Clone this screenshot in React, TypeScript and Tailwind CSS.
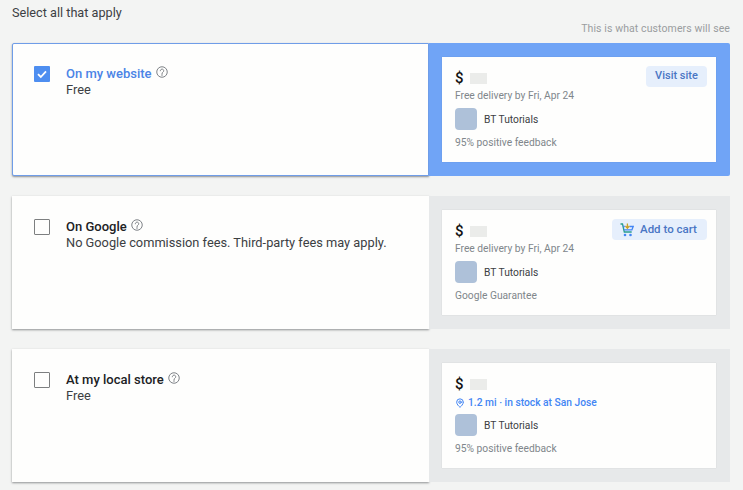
import { MapPin } from "lucide-react";

type Row = {
  title: string;
  subtitle: string;
  selected?: boolean;
  action?: "visit" | "cart";
  delivery?: string;
  location?: string;
  footer: string;
};

const ROWS: Row[] = [
  {
    title: "On my website",
    subtitle: "Free",
    selected: true,
    action: "visit",
    delivery: "Free delivery by Fri, Apr 24",
    footer: "95% positive feedback",
  },
  {
    title: "On Google",
    subtitle: "No Google commission fees. Third-party fees may apply.",
    action: "cart",
    delivery: "Free delivery by Fri, Apr 24",
    footer: "Google Guarantee",
  },
  {
    title: "At my local store",
    subtitle: "Free",
    location: "1.2 mi · in stock at San Jose",
    footer: "95% positive feedback",
  },
];

function HelpIcon() {
  return (
    <svg className="ml-[4px] mt-[-5px] h-[12px] w-[12px] text-[#70757a]" viewBox="0 0 24 24" fill="none" stroke="currentColor" strokeWidth={1.8}>
      <circle cx="12" cy="12" r="10.5" />
      <path d="M8.6 9.6a3.4 3.4 0 1 1 5.5 2.6c-1.3 1-2.1 1.6-2.1 3" strokeLinecap="round" />
      <circle cx="12" cy="18" r="0.6" fill="currentColor" />
    </svg>
  );
}

function CartIcon() {
  return (
    <svg className="h-[14px] w-[14px]" viewBox="0 0 14 14" fill="none" strokeWidth={1.3}>
      <path d="M0.5 1h2l1.8 8h7.4" stroke="#2a9d8f" />
      <path d="M3 3.5h1.8M9.5 3.5h3.7l-1.3 3.4H4" stroke="#4285f4" />
      <path d="M7.4 0.5v4.6M5.4 3l2 2.2 2-2.2" stroke="#c9a227" />
      <circle cx="5" cy="12" r="1.3" fill="#4285f4" />
      <circle cx="10.5" cy="12" r="1.3" fill="#4285f4" />
    </svg>
  );
}

function PreviewCard({ row }: { row: Row }) {
  return (
    <div className="relative h-[105px] w-full bg-[#fefefd] pl-[13px] pt-[13px] shadow-[0_0_1px_rgba(0,0,0,0.15)]">
      {row.action === "visit" && (
        <div className="absolute right-[9px] top-[9px] flex h-[21px] w-[61px] items-center justify-center rounded-[4px] bg-[#e6effc] text-[11px] font-medium text-[#4a76c4]">
          Visit site
        </div>
      )}
      {row.action === "cart" && (
        <div className="absolute right-[9px] top-[9px] flex h-[21px] w-[95px] items-center gap-[6px] rounded-[4px] bg-[#e6effc] pl-[8px] text-[11.5px] font-medium text-[#4a76c4]">
          <CartIcon />
          Add to cart
        </div>
      )}
      <div className="flex h-[17px] items-center gap-[6px]">
        <span className="text-[15px] font-medium leading-none text-[#111]">$</span>
        <div className="h-[11px] w-[17px] bg-[#ebecea]" />
      </div>
      {row.delivery && <div className="text-[10.25px] leading-[17px] text-[#80868b]">{row.delivery}</div>}
      {row.location && (
        <div className="flex h-[17px] items-center gap-[3px] pt-[2px] text-[10.25px] font-medium text-[#4285f4]">
          <MapPin className="h-[10px] w-[10px]" strokeWidth={2.4} />
          {row.location}
        </div>
      )}
      <div className="mt-[4px] flex items-center gap-[7px]">
        <div className="h-[22px] w-[22px] rounded-[4px] bg-[#aec1d9]" />
        <span className="pt-[1px] text-[10.25px] text-[#3c4043]">BT Tutorials</span>
      </div>
      <div className="mt-[6px] text-[10.25px] leading-[14px] text-[#80868b]">{row.footer}</div>
    </div>
  );
}

function OptionRow({ row }: { row: Row }) {
  return (
    <div className="flex h-[133px] w-[718px]">
      <div
        className={`flex w-[417px] items-start bg-[#fefefd] shadow-[0_1px_2px_rgba(60,64,67,0.55)] ${
          row.selected ? "rounded-l-[2px] border border-[#6f9de8] pl-[21px] pt-[22px]" : "pl-[22px] pt-[23px]"
        }`}
      >
        {row.selected ? (
          <div className="flex h-[16px] w-[16px] items-center justify-center rounded-[1px] bg-[#4e8ef0]">
            <svg className="h-[12px] w-[12px] text-white" viewBox="0 0 12 12" fill="none" stroke="currentColor" strokeWidth={1.8}>
              <path d="M2 6.2l2.8 2.8L10 3.4" />
            </svg>
          </div>
        ) : (
          <div className="h-[16px] w-[16px] rounded-[1px] border-[1.5px] border-[#7d7f80]" />
        )}
        <div className="ml-[16px]">
          <div className="flex items-center">
            <span className={`text-[13px] font-medium leading-[16px] ${row.selected ? "text-[#4b84e6]" : "text-[#202124]"}`}>{row.title}</span>
            <HelpIcon />
          </div>
          <div className="text-[12.8px] leading-[16px] text-[#3c4043]">{row.subtitle}</div>
        </div>
      </div>
      <div className={`flex flex-1 items-center pl-[13px] pr-[14px] ${row.selected ? "rounded-r-[2px] bg-[#70a4f6]" : "bg-[#e7e9ea]"}`}>
        <PreviewCard row={row} />
      </div>
    </div>
  );
}

export default function App() {
  return (
    <div className="h-[490px] w-[743px] overflow-hidden bg-[#f3f4f3] pl-[12px] font-['Roboto',sans-serif]">
      <div className="h-[43px] w-[718px]">
        <div className="pt-[5px] text-[12.7px] leading-[16px] text-[#3c4043]">Select all that apply</div>
        <div className="mt-[1px] text-right text-[10.5px] leading-[14px] tracking-[0.1px] text-[#9a9d9f]">This is what customers will see</div>
      </div>
      <div className="flex flex-col gap-[20px]">
        {ROWS.map((row) => (
          <OptionRow key={row.title} row={row} />
        ))}
      </div>
    </div>
  );
}
